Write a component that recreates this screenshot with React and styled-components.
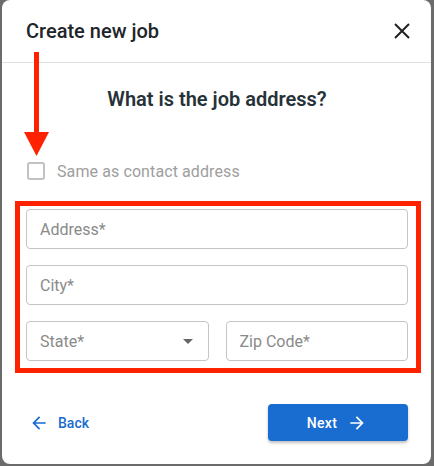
import styled, { createGlobalStyle } from "styled-components";

const GlobalStyle = createGlobalStyle`
  body {
    margin: 0;
    background: #6b6b6b;
    font-family: Roboto, "Liberation Sans", sans-serif;
  }
`;

const Dialog = styled.div`
  position: relative;
  width: 429px;
  height: 464px;
  margin-left: 2px;
  background: #fff;
  border-radius: 8px;
  display: flex;
  flex-direction: column;
  box-sizing: border-box;
`;

const Header = styled.div`
  height: 62px;
  border-bottom: 1px solid #e0e0e0;
  display: flex;
  align-items: center;
  justify-content: space-between;
  padding: 0 20px 0 24px;
  h2 {
    margin: 0;
    font-size: 20px;
    font-weight: 500;
    color: #212529;
  }
`;

const CloseButton = styled.button`
  border: none;
  background: none;
  padding: 0;
  width: 18px;
  height: 18px;
  display: flex;
  align-items: center;
  justify-content: center;
  cursor: pointer;
`;

const Body = styled.div`
  padding: 0 23px 0 24px;
  display: flex;
  flex-direction: column;
  flex: 1;
`;

const Question = styled.h3`
  margin: 22px 0 0;
  line-height: 28px;
  font-size: 20px;
  font-weight: 600;
  color: #263238;
  text-align: center;
`;

const CheckRow = styled.label`
  margin-top: 49px;
  height: 18px;
  display: flex;
  align-items: center;
  gap: 12px;
  padding-left: 1px;
  font-size: 16px;
  letter-spacing: 0.1px;
  color: #9e9e9e;
`;

const Box = styled.span`
  width: 18px;
  height: 18px;
  box-sizing: border-box;
  border: 2px solid #c2c2c2;
  border-radius: 3px;
`;

const Fields = styled.div`
  position: relative;
  margin-top: 29px;
  display: grid;
  grid-template-columns: 1fr 1fr;
  column-gap: 17px;
  row-gap: 16px;
  &::after {
    content: "";
    position: absolute;
    left: -11px;
    top: -8px;
    right: -13px;
    bottom: -12px;
    border: 5px solid #ff2200;
    pointer-events: none;
  }
`;

const Field = styled.div`
  grid-column: ${(p) => (p.$full ? "1 / -1" : "auto")};
  height: 40px;
  box-sizing: border-box;
  border: 1px solid #c4c4c4;
  border-radius: 4px;
  display: flex;
  align-items: center;
  justify-content: space-between;
  padding: 0 14px 0 13px;
  font-size: 16px;
  color: #8a8a8a;
`;

const Footer = styled.div`
  margin-top: 44px;
  display: flex;
  align-items: center;
  justify-content: space-between;
`;

const BackButton = styled.button`
  border: none;
  background: none;
  display: flex;
  align-items: center;
  gap: 9px;
  padding: 0 0 0 3px;
  font-family: inherit;
  font-size: 14px;
  font-weight: 500;
  color: #1a6bcf;
  cursor: pointer;
`;

const NextButton = styled.button`
  width: 140px;
  height: 37px;
  margin-top: -1px;
  border: none;
  border-radius: 4px;
  background: #1a6dd0;
  box-shadow: 0 2px 3px rgba(0, 0, 0, 0.25);
  display: flex;
  align-items: center;
  justify-content: center;
  gap: 10px;
  padding-left: 4px;
  font-family: inherit;
  font-size: 14px;
  font-weight: 500;
  letter-spacing: 0.3px;
  color: #fff;
  cursor: pointer;
`;

const Pointer = styled.svg`
  position: absolute;
  left: 20px;
  top: 52px;
  pointer-events: none;
`;

const ArrowBack = () => (
  <svg width="20" height="20" viewBox="0 0 24 24" fill="currentColor">
    <path d="M20 11H7.83l5.59-5.59L12 4l-8 8 8 8 1.41-1.41L7.83 13H20v-2z" />
  </svg>
);

const ArrowForward = () => (
  <svg width="20" height="20" viewBox="0 0 24 24" fill="currentColor">
    <path d="M12 4l-1.41 1.41L16.17 11H4v2h12.17l-5.58 5.59L12 20l8-8z" />
  </svg>
);

const App = () => {
  return (
    <>
      <GlobalStyle />
      <Dialog>
        <Header>
          <h2>Create new job</h2>
          <CloseButton>
            <svg width="16" height="16" viewBox="0 0 16 16">
              <path d="M1 1L15 15M15 1L1 15" stroke="#222" strokeWidth="2" />
            </svg>
          </CloseButton>
        </Header>
        <Body>
          <Question>What is the job address?</Question>
          <CheckRow>
            <Box />
            Same as contact address
          </CheckRow>
          <Fields>
            <Field $full>Address*</Field>
            <Field $full>City*</Field>
            <Field>
              State*
              <svg width="24" height="24" viewBox="0 0 24 24" fill="#666" style={{ marginRight: -6 }}>
                <path d="M7 10l5 5 5-5z" />
              </svg>
            </Field>
            <Field>Zip Code*</Field>
          </Fields>
          <Footer>
            <BackButton>
              <ArrowBack />
              Back
            </BackButton>
            <NextButton>
              Next
              <ArrowForward />
            </NextButton>
          </Footer>
        </Body>
        <Pointer width="30" height="106" viewBox="0 0 30 106">
          <rect x="12" y="0" width="5" height="82" fill="#ff2200" />
          <path d="M2 80H27L14.5 104Z" fill="#ff2200" />
        </Pointer>
      </Dialog>
    </>
  );
};

export default App;
